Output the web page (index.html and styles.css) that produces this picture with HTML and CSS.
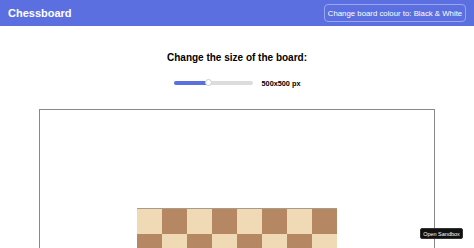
FILE: index.html
```html
<!DOCTYPE html>
<html>
<head>
<meta charset="utf-8">
<link rel="stylesheet" href="styles.css">
</head>
<body>
<header class="topbar">
  <div class="brand">Chessboard</div>
  <button class="colour-btn">Change board colour to: Black &amp; White</button>
</header>
<main class="main">
  <h2 class="title">Change the size of the board:</h2>
  <div class="size-row">
    <div class="slider"><div class="fill"></div><div class="thumb"></div></div>
    <span class="size-label">500x500 px</span>
  </div>
  <div class="frame">
    <div class="board">
      <div class="sq l"></div><div class="sq d"></div><div class="sq l"></div><div class="sq d"></div><div class="sq l"></div><div class="sq d"></div><div class="sq l"></div><div class="sq d"></div>
      <div class="sq d"></div><div class="sq l"></div><div class="sq d"></div><div class="sq l"></div><div class="sq d"></div><div class="sq l"></div><div class="sq d"></div><div class="sq l"></div>
    </div>
  </div>
</main>
<button class="sandbox">Open Sandbox</button>
</body>
</html>
```
FILE: styles.css
```css
html, body {
  margin: 0;
  padding: 0;
  background: #fff;
  font-family: "Liberation Sans", Arial, sans-serif;
  overflow: hidden;
}
.topbar {
  height: 26px;
  background: #5c6fe0;
  display: flex;
  align-items: center;
  justify-content: space-between;
  padding: 0 8px 0 8px;
  box-sizing: border-box;
}
.brand {
  color: #fff;
  font-weight: bold;
  font-size: 11px;
}
.colour-btn {
  height: 18px;
  width: 142px;
  padding: 0;
  background: #5c6fe0;
  color: #fff;
  border: 1px solid #9aa6f0;
  border-radius: 4px;
  font-family: "Liberation Sans", Arial, sans-serif;
  font-size: 7.8px;
  white-space: nowrap;
}
.main {
  display: flex;
  flex-direction: column;
  align-items: center;
}
.title {
  margin: 25px 0 0 0;
  font-size: 10px;
  font-weight: bold;
  color: #000;
  line-height: 14px;
}
.size-row {
  display: flex;
  align-items: center;
  gap: 9px;
  margin-top: 12px;
  height: 12px;
}
.slider {
  position: relative;
  width: 79px;
  height: 4px;
  background: #dcdcdc;
  border-radius: 2px;
}
.fill {
  width: 34px;
  height: 4px;
  background: #5c6fe0;
  border-radius: 2px;
}
.thumb {
  position: absolute;
  left: 31px;
  top: -2px;
  width: 7px;
  height: 7px;
  border-radius: 50%;
  background: #fff;
  border: 1px solid #ccc;
  box-sizing: border-box;
}
.size-label {
  font-size: 7.3px;
  font-weight: bold;
  color: #000;
}
.frame {
  margin-top: 20px;
  width: 396px;
  height: 139px;
  border: 1px solid #888;
  border-bottom: none;
  box-sizing: border-box;
  display: flex;
  justify-content: center;
  padding-top: 98px;
  overflow: hidden;
}
.board {
  width: 200px;
  height: 200px;
  display: grid;
  grid-template-columns: repeat(8, 25px);
  grid-auto-rows: 25px;
  flex-shrink: 0;
  border-top: 1px solid #a89b8c;
  box-sizing: border-box;
}
.sq.l { background: #f0d9b5; }
.sq.d { background: #b58863; }
.sandbox {
  position: fixed;
  right: 11px;
  bottom: 9px;
  height: 11px;
  width: 43px;
  padding: 0;
  background: #111;
  color: #fff;
  border: 1px solid #333;
  border-radius: 2px;
  font-family: "Liberation Sans", Arial, sans-serif;
  font-size: 5.5px;
}
```
